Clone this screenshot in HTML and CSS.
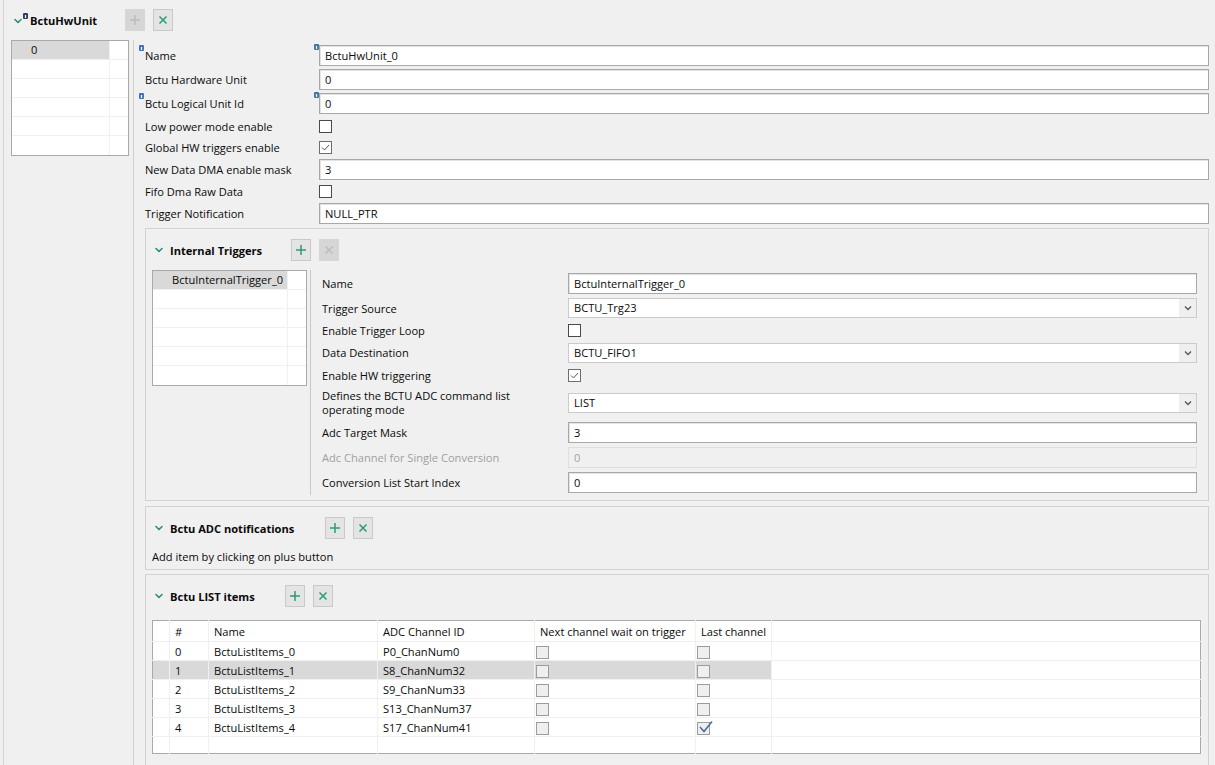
FILE: index.html
```html
<!DOCTYPE html>
<html>
<head>
<meta charset="utf-8">
<link rel="stylesheet" href="styles.css">
</head>
<body>
<div class="frame">
  <div class="head">
    <svg class="chev" width="8" height="6" viewBox="0 0 8 6"><polyline points="1,1.5 4,4.5 7,1.5"/></svg>
    <svg class="info navy" width="5" height="6" viewBox="0 0 5 6"><rect x="0" y="0" width="5" height="6" rx="1"/><line x1="2.5" y1="2" x2="2.5" y2="5"/></svg>
    <span class="title">BctuHwUnit</span>
    <span class="btn dis"><svg width="12" height="12" viewBox="0 0 12 12"><path d="M6 1v10M1 6h10"/></svg></span>
    <span class="btn"><svg width="10" height="10" viewBox="0 0 10 10"><path d="M1.5 1.5l7 7M8.5 1.5l-7 7"/></svg></span>
  </div>
  <div class="main">
    <div class="leftcol">
      <div class="list l1">
        <div class="lrow sel"><span class="c1">0</span><span class="c2"></span></div>
        <div class="lrow"><span class="c1"></span><span class="c2"></span></div>
        <div class="lrow"><span class="c1"></span><span class="c2"></span></div>
        <div class="lrow"><span class="c1"></span><span class="c2"></span></div>
        <div class="lrow"><span class="c1"></span><span class="c2"></span></div>
        <div class="lrow last"><span class="c1"></span><span class="c2"></span></div>
      </div>
    </div>
    <div class="form">
      <div class="topgrid">
        <div class="lab"><svg class="info" width="5" height="6" viewBox="0 0 5 6"><rect x="0" y="0" width="5" height="6" rx="1"/><line x1="2.5" y1="2" x2="2.5" y2="5"/></svg><span>Name</span></div>
        <div class="ic"><svg class="info" width="5" height="6" viewBox="0 0 5 6"><rect x="0" y="0" width="5" height="6" rx="1"/><line x1="2.5" y1="2" x2="2.5" y2="5"/></svg></div>
        <div class="val"><div class="inp">BctuHwUnit_0</div></div>

        <div class="lab pad">Bctu Hardware Unit</div>
        <div class="ic"></div>
        <div class="val"><div class="inp">0</div></div>

        <div class="lab"><svg class="info" width="5" height="6" viewBox="0 0 5 6"><rect x="0" y="0" width="5" height="6" rx="1"/><line x1="2.5" y1="2" x2="2.5" y2="5"/></svg><span>Bctu Logical Unit Id</span></div>
        <div class="ic"><svg class="info" width="5" height="6" viewBox="0 0 5 6"><rect x="0" y="0" width="5" height="6" rx="1"/><line x1="2.5" y1="2" x2="2.5" y2="5"/></svg></div>
        <div class="val"><div class="inp">0</div></div>

        <div class="lab pad">Low power mode enable</div>
        <div class="ic"></div>
        <div class="val"><span class="cb"></span></div>

        <div class="lab pad">Global HW triggers enable</div>
        <div class="ic"></div>
        <div class="val"><span class="cb on"><svg width="11" height="11" viewBox="0 0 11 11"><polyline points="2,5.5 4.5,8 9,3"/></svg></span></div>

        <div class="lab pad">New Data DMA enable mask</div>
        <div class="ic"></div>
        <div class="val"><div class="inp">3</div></div>

        <div class="lab pad">Fifo Dma Raw Data</div>
        <div class="ic"></div>
        <div class="val"><span class="cb"></span></div>

        <div class="lab pad">Trigger Notification</div>
        <div class="ic"></div>
        <div class="val"><div class="inp">NULL_PTR</div></div>
      </div>

      <div class="panel p-int">
        <div class="phead">
          <svg class="chev" width="8" height="6" viewBox="0 0 8 6"><polyline points="1,1.5 4,4.5 7,1.5"/></svg>
          <span class="ptitle">Internal Triggers</span>
          <span class="btn b-int"><svg width="12" height="12" viewBox="0 0 12 12"><path d="M6 1v10M1 6h10"/></svg></span>
          <span class="btn dis"><svg width="10" height="10" viewBox="0 0 10 10"><path d="M1.5 1.5l7 7M8.5 1.5l-7 7"/></svg></span>
        </div>
        <div class="pbody">
          <div class="listwrap">
            <div class="list l2">
              <div class="lrow sel"><span class="c1">BctuInternalTrigger_0</span><span class="c2"></span></div>
              <div class="lrow"><span class="c1"></span><span class="c2"></span></div>
              <div class="lrow"><span class="c1"></span><span class="c2"></span></div>
              <div class="lrow"><span class="c1"></span><span class="c2"></span></div>
              <div class="lrow"><span class="c1"></span><span class="c2"></span></div>
              <div class="lrow last"><span class="c1"></span><span class="c2"></span></div>
            </div>
          </div>
          <div class="intgrid">
            <div class="lab2">Name</div>
            <div class="val"><div class="inp">BctuInternalTrigger_0</div></div>

            <div class="lab2">Trigger Source</div>
            <div class="val"><div class="combo"><span class="ct">BCTU_Trg23</span><span class="cbtn"><svg width="8" height="6" viewBox="0 0 8 6"><polyline points="1,1.5 4,4.5 7,1.5"/></svg></span></div></div>

            <div class="lab2">Enable Trigger Loop</div>
            <div class="val"><span class="cb"></span></div>

            <div class="lab2">Data Destination</div>
            <div class="val"><div class="combo"><span class="ct">BCTU_FIFO1</span><span class="cbtn"><svg width="8" height="6" viewBox="0 0 8 6"><polyline points="1,1.5 4,4.5 7,1.5"/></svg></span></div></div>

            <div class="lab2">Enable HW triggering</div>
            <div class="val"><span class="cb on"><svg width="11" height="11" viewBox="0 0 11 11"><polyline points="2,5.5 4.5,8 9,3"/></svg></span></div>

            <div class="lab2 two">Defines the BCTU ADC command list<br>operating mode</div>
            <div class="val"><div class="combo"><span class="ct">LIST</span><span class="cbtn"><svg width="8" height="6" viewBox="0 0 8 6"><polyline points="1,1.5 4,4.5 7,1.5"/></svg></span></div></div>

            <div class="lab2">Adc Target Mask</div>
            <div class="val"><div class="inp">3</div></div>

            <div class="lab2 disl">Adc Channel for Single Conversion</div>
            <div class="val"><div class="inp disi">0</div></div>

            <div class="lab2">Conversion List Start Index</div>
            <div class="val"><div class="inp">0</div></div>
          </div>
        </div>
      </div>

      <div class="panel p-adc">
        <div class="phead">
          <svg class="chev" width="8" height="6" viewBox="0 0 8 6"><polyline points="1,1.5 4,4.5 7,1.5"/></svg>
          <span class="ptitle">Bctu ADC notifications</span>
          <span class="btn b-adc"><svg width="12" height="12" viewBox="0 0 12 12"><path d="M6 1v10M1 6h10"/></svg></span>
          <span class="btn"><svg width="10" height="10" viewBox="0 0 10 10"><path d="M1.5 1.5l7 7M8.5 1.5l-7 7"/></svg></span>
        </div>
        <div class="note">Add item by clicking on plus button</div>
      </div>

      <div class="panel p-list">
        <div class="phead">
          <svg class="chev" width="8" height="6" viewBox="0 0 8 6"><polyline points="1,1.5 4,4.5 7,1.5"/></svg>
          <span class="ptitle">Bctu LIST items</span>
          <span class="btn b-list"><svg width="12" height="12" viewBox="0 0 12 12"><path d="M6 1v10M1 6h10"/></svg></span>
          <span class="btn"><svg width="10" height="10" viewBox="0 0 10 10"><path d="M1.5 1.5l7 7M8.5 1.5l-7 7"/></svg></span>
        </div>
        <table class="tbl">
          <colgroup><col class="w0"><col class="w1"><col class="w2"><col class="w3"><col class="w4"><col class="w5"><col></colgroup>
          <tr class="th"><td></td><td>#</td><td>Name</td><td>ADC Channel ID</td><td>Next channel wait on trigger</td><td>Last channel</td><td></td></tr>
          <tr><td></td><td>0</td><td>BctuListItems_0</td><td>P0_ChanNum0</td><td><span class="tcb"></span></td><td><span class="tcb"></span></td><td></td></tr>
          <tr class="sel"><td></td><td>1</td><td>BctuListItems_1</td><td>S8_ChanNum32</td><td><span class="tcb"></span></td><td><span class="tcb"></span></td><td class="nosel"></td></tr>
          <tr><td></td><td>2</td><td>BctuListItems_2</td><td>S9_ChanNum33</td><td><span class="tcb"></span></td><td><span class="tcb"></span></td><td></td></tr>
          <tr><td></td><td>3</td><td>BctuListItems_3</td><td>S13_ChanNum37</td><td><span class="tcb"></span></td><td><span class="tcb"></span></td><td></td></tr>
          <tr><td></td><td>4</td><td>BctuListItems_4</td><td>S17_ChanNum41</td><td><span class="tcb"></span></td><td><span class="tcb chk"><svg width="16" height="15" viewBox="0 0 16 15"><polyline points="2,7 6,11.5 14,1.5"/></svg></span></td><td></td></tr>
          <tr class="empty"><td></td><td></td><td></td><td></td><td></td><td></td><td></td></tr>
        </table>
      </div>
    </div>
  </div>
</div>
</body>
</html>
```

FILE: styles.css
```css
* { box-sizing: border-box; }
html, body { margin: 0; padding: 0; }
body {
  background: #f0f0f0;
  font-family: "Open Sans", "Noto Sans", sans-serif;
  font-size: 11.1px;
  color: #0a0a0a;
  width: 1215px;
  height: 765px;
  overflow: hidden;
}
.frame {
  margin-left: 3px;
  border-left: 1px solid #d4d4d4;
  height: 765px;
  padding-right: 6px;
}
.head {
  height: 40px;
  display: flex;
  align-items: center;
  padding-left: 10px;
}
.chev { flex: none; }
.chev polyline { fill: none; stroke: #2b8f7c; stroke-width: 1.6; stroke-linecap: round; stroke-linejoin: round; }
.head .chev { margin-top: 2px; }
.info rect { fill: #4273b3; }
.info line { stroke: #fff; stroke-width: 1.2; }
.info.navy rect { fill: #2c3f66; }
.head .info { align-self: flex-start; margin-top: 13px; margin-left: 1px; }
.title { font-weight: bold; margin-left: 2px; }
.btn {
  display: inline-flex;
  align-items: center;
  justify-content: center;
  width: 20px;
  height: 22px;
  background: #e4e4e4;
  border: 1px solid #c9c9c9;
  flex: none;
}
.btn + .btn { margin-left: 8px; }
.btn path { stroke: #2b9a76; stroke-width: 1.5; fill: none; }
.btn.dis { background: #d6d6d6; border-color: #d6d6d6; }
.btn.dis path { stroke: #bcbcbc; }
.head .title + .btn { margin-left: 28px; }

.main { display: flex; height: 725px; }
.leftcol {
  width: 130px;
  flex: none;
  border-right: 1px solid #d0d0d0;
  padding-left: 7px;
}
.list {
  background: #fff;
  border: 1px solid #a9a9a9;
}
.l1 { width: 118px; height: 116px; }
.lrow { display: flex; height: 19px; border-bottom: 1px solid #f0f0f0; }
.lrow.last { border-bottom: none; }
.lrow .c1 { width: 98px; border-right: 1px solid #f0f0f0; padding-left: 19px; line-height: 18px; white-space: nowrap; }
.lrow .c2 { flex: 1; }
.lrow.sel .c1 { background: #d9d9d9; }
.l2 { width: 155px; height: 116px; }
.l2 .lrow .c1 { width: 135px; }

.form { flex: 1; padding-left: 5px; padding-top: 3px; }
.topgrid {
  display: grid;
  grid-template-columns: 175px 5px 1fr;
  grid-template-rows: 24px 24px 24px 22px 20px 24px 20px 24px;
}
.lab { display: flex; align-items: center; white-space: nowrap; }
.lab .info { align-self: flex-start; margin-top: 2px; margin-right: 1px; flex: none; }
.lab.pad { padding-left: 6px; }
.lab span { margin-top: 1px; }
.ic { display: flex; align-items: flex-start; padding-top: 1px; }
.val { display: flex; align-items: center; }
.inp {
  width: 100%;
  height: 21px;
  background: #fff;
  border: 1px solid #a8a8a8;
  box-shadow: inset 1px 1px 0 #e3e3e3;
  padding-left: 5px;
  line-height: 19px;
  white-space: nowrap;
}
.inp.disi { background: #f0f0f0; border-color: #dedede; box-shadow: none; color: #a3a3a3; }
.cb {
  display: inline-flex;
  width: 13px;
  height: 13px;
  border: 1px solid #4a4a4a;
  background: #fff;
  align-items: center;
  justify-content: center;
}
.cb.on { border-color: #6e6e6e; }
.cb polyline { fill: none; stroke: #555; stroke-width: 1; }

.panel {
  margin-left: 6px;
  border: 1px solid #d2d2d2;
}
.p-int { margin-top: 3px; padding-bottom: 5px; }
.phead {
  display: flex;
  align-items: center;
  height: 22px;
  margin-top: 10px;
  padding-left: 9px;
}
.ptitle { font-weight: bold; margin-left: 7px; }
.btn.b-int { margin-left: 29px; }
.btn.b-adc { margin-left: 31px; }
.btn.b-list { margin-left: 30px; }
.pbody { display: flex; margin-top: 9px; padding-left: 6px; padding-right: 11px; }
.listwrap { width: 159px; flex: none; border-right: 1px solid #c8c8c8; height: 225px; }
.intgrid {
  flex: 1;
  display: grid;
  grid-template-columns: 246px 1fr;
  grid-template-rows: 25px 24px 21px 23px 22px 34px 25px 25px 25px;
  margin-top: 1px;
  padding-left: 11px;
}
.lab2 { display: flex; align-items: center; white-space: nowrap; }
.lab2.two { line-height: 14px; }
.lab2.disl { color: #a0a0a0; }
.combo {
  width: 100%;
  height: 20px;
  background: #fff;
  border: 1px solid #cbcbcb;
  display: flex;
}
.ct { flex: 1; padding-left: 5px; line-height: 18px; }
.cbtn { width: 17px; background: #efefef; display: flex; align-items: center; justify-content: center; }
.cbtn polyline { fill: none; stroke: #555; stroke-width: 1.3; }

.p-adc { margin-top: 5px; height: 64px; }
.note { margin-top: 10px; padding-left: 6px; line-height: 16px; }

.p-list { margin-top: 4px; height: 200px; }
.tbl {
  margin-top: 13px;
  margin-left: 6px;
  width: 1049px;
  border-collapse: collapse;
  table-layout: fixed;
  background: #fff;
  border: 1px solid #a9a9a9;
}
.w0 { width: 17px; }
.w1 { width: 39px; }
.w2 { width: 169px; }
.w3 { width: 157px; }
.w4 { width: 161px; }
.w5 { width: 76px; }
.tbl td {
  height: 19px;
  padding: 0 0 0 5px;
  border-right: 1px solid #f0f0f0;
  border-bottom: 1px solid #f0f0f0;
  white-space: nowrap;
  overflow: hidden;
  vertical-align: middle;
  line-height: 17px;
}
.tbl td:last-child { border-right: none; }
.tbl .th td { height: 21px; padding-top: 1px; }
.tbl tr.sel td { background: #d9d9d9; }
.tbl tr.sel td.nosel { background: #fff; }
.tbl tr.empty td { height: 17px; border-bottom: none; }
.tcb {
  display: inline-block;
  width: 13px;
  height: 13px;
  border: 1px solid #9c9c9c;
  background: #efefef;
  vertical-align: middle;
  margin-left: -4px;
  position: relative;
}
.tcb.chk svg { position: absolute; left: 0; top: -3px; }
.tcb.chk polyline { fill: none; stroke: #4b6ea0; stroke-width: 1.6; }
```
